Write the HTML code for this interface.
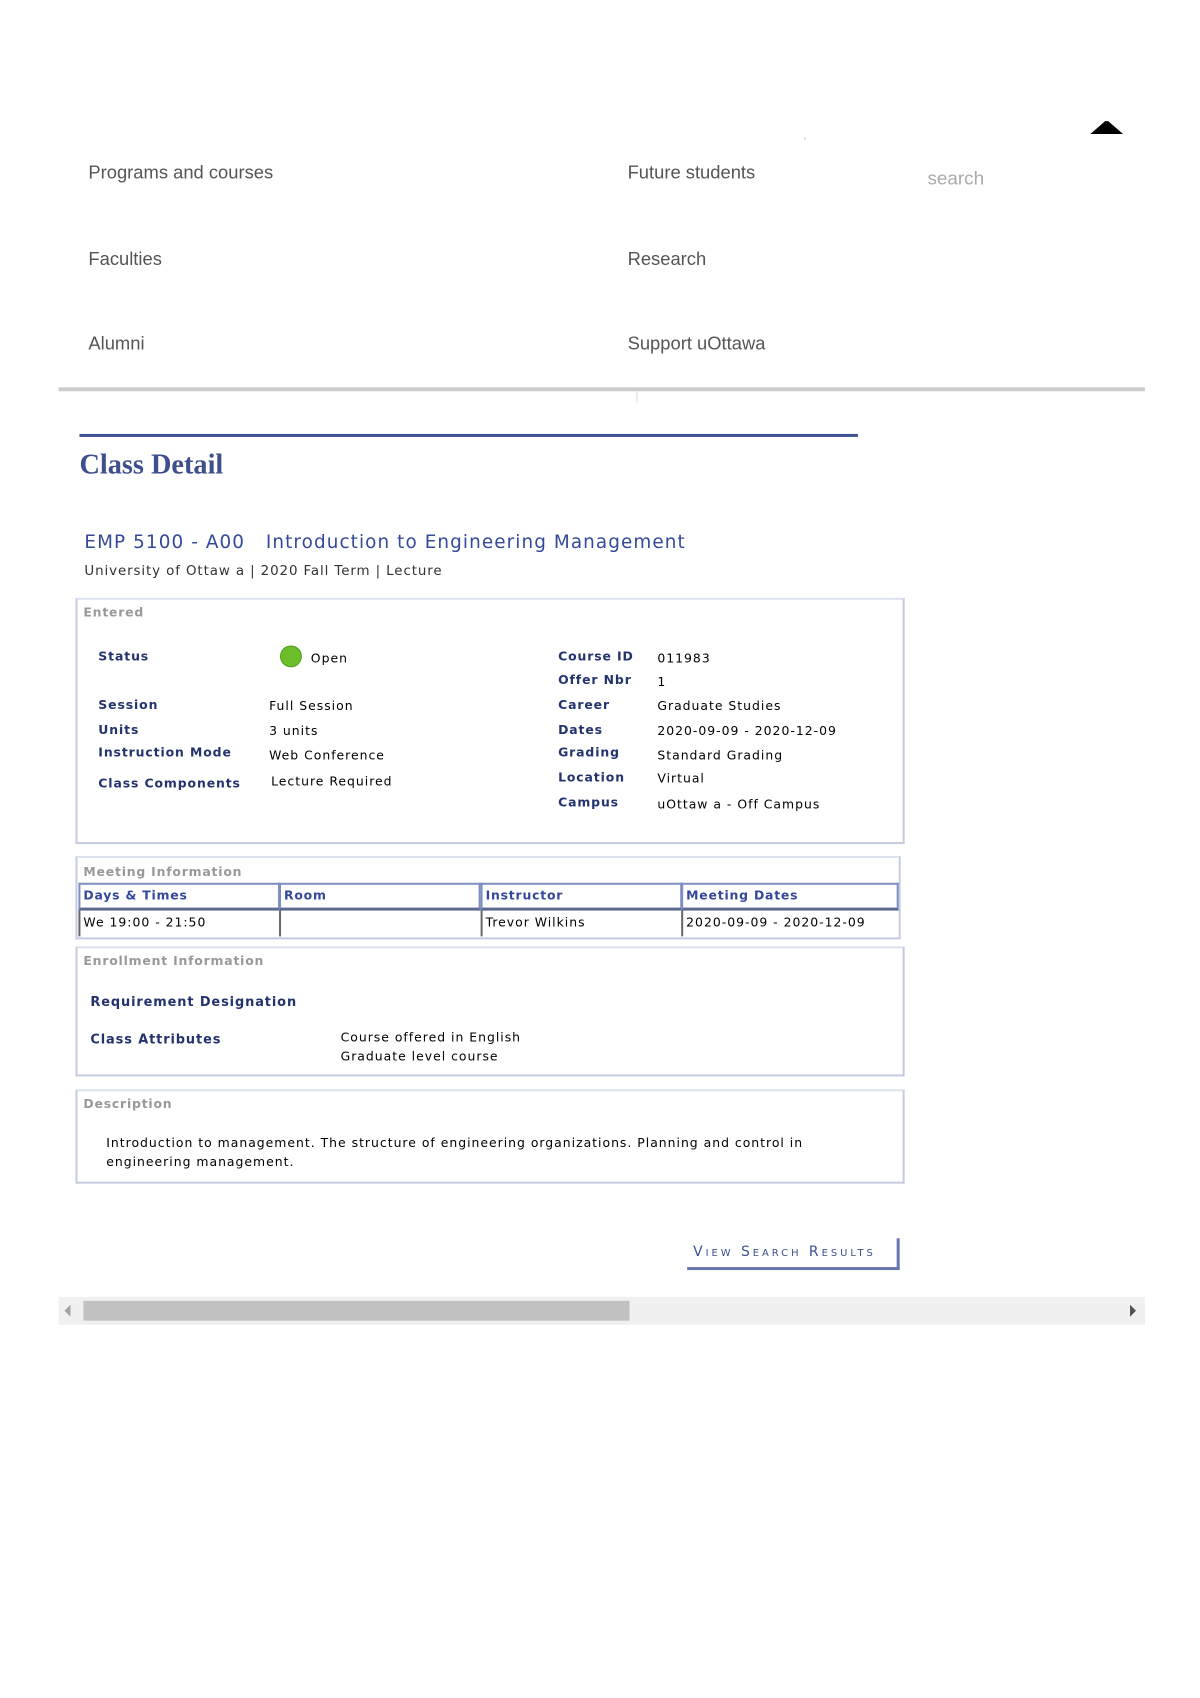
<!DOCTYPE html>
<html><head><meta charset="utf-8"><style>
*{margin:0;padding:0;box-sizing:border-box}
body{width:1200px;height:1698px;background:#fff;position:relative;font-family:"DejaVu Sans","Liberation Sans",sans-serif;font-size:12.5px;color:#000;overflow:hidden;letter-spacing:1px}
#w{position:absolute;left:0;top:0;width:1200px;height:1698px;transform:scale(.993);transform-origin:0 0}
.a{position:absolute;white-space:nowrap}
.nav{font-family:"Liberation Sans",sans-serif;font-size:18.5px;color:#555;letter-spacing:0}
.lab{font-weight:bold;color:#23336e;font-size:12.5px;letter-spacing:.9px}
.box{position:absolute;border:2px solid #c4cbe0;border-top:2px solid #dbe0ee}
.hd{position:absolute;color:#999;font-weight:bold;font-size:12.5px;letter-spacing:.8px}
.th{position:absolute;border:2px solid #7c8fbf;border-bottom:3px solid #5a6a8f;color:#34489a;font-weight:bold;padding:3px 3px;height:28px;letter-spacing:.8px}
.td{position:absolute;border-left:2px solid #666;padding:4px 3px;height:26px}
</style></head><body><div id="w">
<svg class="a" style="left:1098px;top:121px" width="34" height="15"><polygon points="0,14 15,1 18,1 33,14" fill="#000"/></svg>
<div class="a" style="left:810px;top:138px;width:1px;height:3px;background:#ccc"></div>
<div class="a nav" style="left:89px;top:163px">Programs and courses</div>
<div class="a nav" style="left:632px;top:163px">Future students</div>
<div class="a nav" style="left:934px;top:170px;color:#aaa;font-size:19px">search</div>
<div class="a nav" style="left:89px;top:250px">Faculties</div>
<div class="a nav" style="left:632px;top:250px">Research</div>
<div class="a nav" style="left:89px;top:335px">Alumni</div>
<div class="a nav" style="left:632px;top:335px">Support uOttawa</div>
<div class="a" style="left:59px;top:390px;width:1094px;height:4px;background:#ccc"></div>
<div class="a" style="left:641px;top:394px;width:1px;height:12px;background:#ddd"></div>
<div class="a" style="left:80px;top:437px;width:784px;height:3px;background:#3e5193"></div>
<div class="a" style="left:80px;top:453px;font-family:'Liberation Serif',serif;font-weight:bold;font-size:28.5px;color:#3e4f8c;letter-spacing:0">Class Detail</div>
<div class="a" style="left:85px;top:536px;font-size:18.5px;color:#34499a;letter-spacing:1.1px">EMP 5100 - A00 &nbsp;&nbsp;Introduction to Engineering Management</div>
<div class="a" style="left:85px;top:567px;font-size:13.5px;color:#333;letter-spacing:.9px">University of Ottaw a | 2020 Fall Term | Lecture</div>

<div class="box" style="left:76px;top:602px;width:835px;height:248px"></div>
<div class="hd" style="left:84px;top:609px">Entered</div>
<div class="a lab" style="left:99px;top:653px">Status</div>
<div class="a" style="left:282px;top:650px;width:22px;height:22px;border-radius:50%;background:#6cbf2a;border:1px solid #4f9a1a"></div>
<div class="a" style="left:313px;top:655px">Open</div>
<div class="a lab" style="left:99px;top:702px">Session</div><div class="a" style="left:271px;top:703px">Full Session</div>
<div class="a lab" style="left:99px;top:727px">Units</div><div class="a" style="left:271px;top:728px">3 units</div>
<div class="a lab" style="left:99px;top:750px">Instruction Mode</div><div class="a" style="left:271px;top:753px">Web Conference</div>
<div class="a lab" style="left:99px;top:781px">Class Components</div><div class="a" style="left:273px;top:779px">Lecture Required</div>
<div class="a lab" style="left:562px;top:653px">Course ID</div><div class="a" style="left:662px;top:655px">011983</div>
<div class="a lab" style="left:562px;top:677px">Offer Nbr</div><div class="a" style="left:662px;top:679px">1</div>
<div class="a lab" style="left:562px;top:702px">Career</div><div class="a" style="left:662px;top:703px">Graduate Studies</div>
<div class="a lab" style="left:562px;top:727px">Dates</div><div class="a" style="left:662px;top:728px">2020-09-09 - 2020-12-09</div>
<div class="a lab" style="left:562px;top:750px">Grading</div><div class="a" style="left:662px;top:753px">Standard Grading</div>
<div class="a lab" style="left:562px;top:775px">Location</div><div class="a" style="left:662px;top:776px">Virtual</div>
<div class="a lab" style="left:562px;top:800px">Campus</div><div class="a" style="left:662px;top:802px">uOttaw a - Off Campus</div>

<div class="box" style="left:76px;top:862px;width:831px;height:84px"></div>
<div class="hd" style="left:84px;top:870px">Meeting Information</div>
<div class="th" style="left:79px;top:889px;width:203px">Days &amp; Times</div>
<div class="th" style="left:281px;top:889px;width:203px">Room</div>
<div class="th" style="left:484px;top:889px;width:203px">Instructor</div>
<div class="th" style="left:686px;top:889px;width:219px">Meeting Dates</div>
<div class="td" style="left:79px;top:917px">We 19:00 - 21:50</div>
<div class="td" style="left:281px;top:917px"></div>
<div class="td" style="left:484px;top:917px">Trevor Wilkins</div>
<div class="td" style="left:686px;top:917px">2020-09-09 - 2020-12-09</div>

<div class="box" style="left:76px;top:953px;width:835px;height:131px"></div>
<div class="hd" style="left:84px;top:960px">Enrollment Information</div>
<div class="a lab" style="left:91px;top:1002px;font-size:13px">Requirement Designation</div>
<div class="a lab" style="left:91px;top:1040px;font-size:13px">Class Attributes</div>
<div class="a" style="left:343px;top:1037px">Course offered in English</div>
<div class="a" style="left:343px;top:1056px">Graduate level course</div>

<div class="box" style="left:76px;top:1097px;width:835px;height:95px"></div>
<div class="hd" style="left:84px;top:1104px">Description</div>
<div class="a" style="left:107px;top:1143px">Introduction to management. The structure of engineering organizations. Planning and control in</div>
<div class="a" style="left:107px;top:1162px">engineering management.</div>

<div class="a" style="left:692px;top:1247px;width:214px;height:32px;border-right:3px solid #6677b0;border-bottom:3px solid #6677b0;color:#3c4f8e;font-size:14px;letter-spacing:3px;padding:6px 0 0 6px;font-variant:small-caps">View Search Results</div>

<div class="a" style="left:59px;top:1306px;width:1094px;height:28px;background:#f0f0f0"></div>
<div class="a" style="left:84px;top:1310px;width:550px;height:20px;background:#c1c1c1"></div>
<svg class="a" style="left:63px;top:1313px" width="10" height="14"><polygon points="8,1 2,7 8,13" fill="#a3a3a3"/></svg>
<svg class="a" style="left:1136px;top:1313px" width="10" height="14"><polygon points="2,1 8,7 2,13" fill="#505050"/></svg>
</div></body></html>
